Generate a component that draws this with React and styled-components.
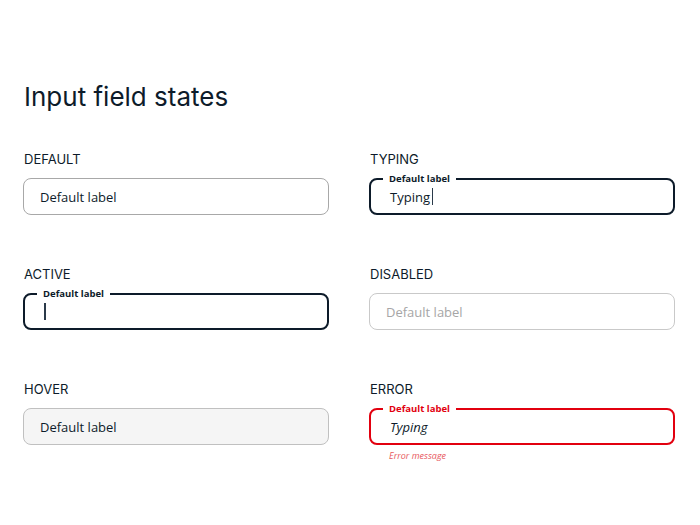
import styled, { createGlobalStyle, css } from 'styled-components';

const GlobalStyle = createGlobalStyle`
  body {
    margin: 0;
    background: #ffffff;
    font-family: 'Open Sans', 'Liberation Sans', sans-serif;
  }
`;

const ink = '#0d1b2a';
const red = '#e2000f';

export const Page = styled.div`
  width: 700px;
  height: 525px;
  box-sizing: border-box;
  padding: 80px 24px 0 23px;
  background: #ffffff;
`;

export const Title = styled.h1`
  margin: 0 0 36px 1px;
  font-family: Inter, 'Noto Sans', sans-serif;
  font-weight: 400;
  font-size: 26px;
  line-height: 34px;
  color: ${ink};
`;

export const Grid = styled.div`
  display: grid;
  grid-template-columns: 306px 306px;
  column-gap: 40px;
  row-gap: 50px;
`;

export const Cell = styled.div`
  display: flex;
  flex-direction: column;
  position: relative;
`;

export const StateName = styled.p`
  margin: 0 0 10px 1px;
  font-family: Inter, 'Noto Sans', sans-serif;
  font-size: 13px;
  line-height: 18px;
  color: ${ink};
`;

const variants = {
  default: css`
    border: 1.5px solid #a8a8a8;
    color: ${ink};
  `,
  hover: css`
    border: 1.5px solid #c0c0c0;
    background: #f5f5f5;
    color: ${ink};
  `,
  disabled: css`
    border: 1.5px solid #c9c9c9;
    color: #a6a6a6;
  `,
  focus: css`
    border: 2px solid ${ink};
    color: ${ink};
    padding-left: 19px;
  `,
  error: css`
    border: 2px solid ${red};
    color: ${ink};
    padding-left: 19px;
    font-style: italic;
  `,
};

export const Field = styled.div`
  position: relative;
  box-sizing: border-box;
  height: 37px;
  border-radius: 8px;
  padding: 0 16px;
  display: flex;
  align-items: center;
  font-size: 13px;
  background: #ffffff;
  ${(p) => variants[p.$variant]}
`;

export const FloatLabel = styled.span`
  position: absolute;
  top: -7px;
  left: 12px;
  padding: 0 6px;
  background: #ffffff;
  font-style: normal;
  font-weight: 700;
  font-size: 9.5px;
  line-height: 12px;
  color: ${(p) => (p.$error ? red : ink)};
`;

export const Caret = styled.span`
  display: inline-block;
  width: 1.5px;
  height: 17px;
  margin-left: ${(p) => (p.$after ? '2px' : '0')};
  background: #2b3a4a;
`;

export const ErrorText = styled.span`
  position: absolute;
  top: 100%;
  left: 20px;
  margin-top: 4px;
  font-style: italic;
  font-size: 9px;
  color: #e8585e;
`;

const Input = ({ variant, label, children, error }) => (
  <Field $variant={variant}>
    {label && <FloatLabel $error={error}>{label}</FloatLabel>}
    {children}
  </Field>
);

export default function App() {
  return (
    <>
      <GlobalStyle />
      <Page>
        <Title>Input field states</Title>
        <Grid>
          <Cell>
            <StateName>DEFAULT</StateName>
            <Input variant="default">Default label</Input>
          </Cell>
          <Cell>
            <StateName>TYPING</StateName>
            <Input variant="focus" label="Default label">
              Typing
              <Caret $after />
            </Input>
          </Cell>
          <Cell>
            <StateName>ACTIVE</StateName>
            <Input variant="focus" label="Default label">
              <Caret />
            </Input>
          </Cell>
          <Cell>
            <StateName>DISABLED</StateName>
            <Input variant="disabled">Default label</Input>
          </Cell>
          <Cell>
            <StateName>HOVER</StateName>
            <Input variant="hover">Default label</Input>
          </Cell>
          <Cell>
            <StateName>ERROR</StateName>
            <Input variant="error" label="Default label" error>
              Typing
            </Input>
            <ErrorText>Error message</ErrorText>
          </Cell>
        </Grid>
      </Page>
    </>
  );
}
